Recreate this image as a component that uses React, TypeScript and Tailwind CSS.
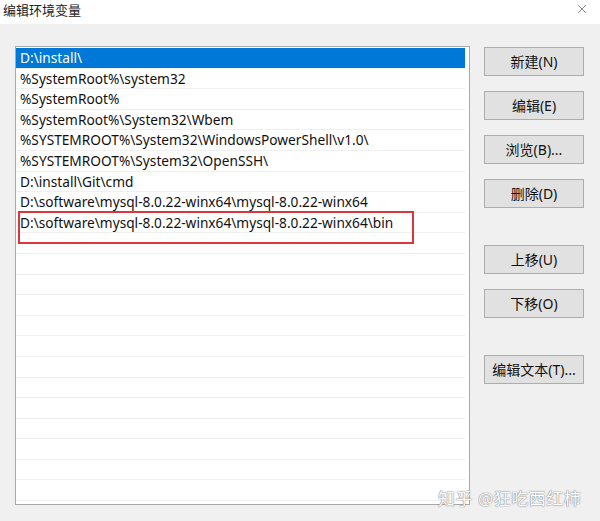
import { X } from 'lucide-react';

const paths = [
  'D:\\install\\',
  '%SystemRoot%\\system32',
  '%SystemRoot%',
  '%SystemRoot%\\System32\\Wbem',
  '%SYSTEMROOT%\\System32\\WindowsPowerShell\\v1.0\\',
  '%SYSTEMROOT%\\System32\\OpenSSH\\',
  'D:\\install\\Git\\cmd',
  'D:\\software\\mysql-8.0.22-winx64\\mysql-8.0.22-winx64',
  'D:\\software\\mysql-8.0.22-winx64\\mysql-8.0.22-winx64\\bin',
];

const rows = Array.from({ length: 22 }, (_, i) => paths[i] ?? '');

function DlgButton({ label, className = '' }: { label: string; className?: string }) {
  return (
    <button
      className={`w-[100px] h-[29px] bg-[#e1e1e1] border border-[#adadad] text-[14px] text-[#111] flex items-center justify-center ${className}`}
    >
      {label}
    </button>
  );
}

export default function App() {
  return (
    <div
      className="w-[600px] h-[521px] bg-[#f0f0f0] flex flex-col overflow-hidden relative"
      style={{ fontFamily: '"Noto Sans", "Noto Sans CJK SC", sans-serif' }}
    >
      <div className="h-[24px] bg-white flex items-start justify-between shrink-0">
        <span className="ml-[3px] mt-[1px] text-[13px] text-[#222] leading-[18px]">编辑环境变量</span>
        <X size={14} strokeWidth={1} className="mt-[2px] mr-[11px] text-[#333]" />
      </div>

      <div className="flex items-start">
        <div className="relative ml-[15px] mt-[22px] w-[455px] h-[459px] bg-white border border-[#a9a9a9] overflow-hidden">
          <div className="pt-[1px] pr-[4px]">
            {rows.map((p, i) => (
              <div
                key={i}
                className={`h-[20.6px] flex items-center pl-[4px] text-[13.7px] leading-none whitespace-nowrap border-b border-[#f0f0f0] ${
                  i === 0 ? 'bg-[#0078d7] text-white' : 'text-[#111]'
                }`}
              >
                {p}
              </div>
            ))}
          </div>
          <div className="absolute left-[2px] top-[164px] w-[396px] h-[33px] border-2 border-[#d9363e]" />
        </div>

        <div className="ml-[14px] mt-[23px] flex flex-col">
          <DlgButton label="新建(N)" />
          <DlgButton label="编辑(E)" className="mt-[15px]" />
          <DlgButton label="浏览(B)..." className="mt-[15px]" />
          <DlgButton label="删除(D)" className="mt-[15px]" />
          <DlgButton label="上移(U)" className="mt-[37px]" />
          <DlgButton label="下移(O)" className="mt-[15px]" />
          <DlgButton label="编辑文本(T)..." className="mt-[37px]" />
        </div>
      </div>

      <div
        className="absolute left-[438px] top-[486px] text-[17px] text-white tracking-[0.5px]"
        style={{ textShadow: '0 0 1px #777, 0 0 1px #777' }}
      >
        知乎 @狂吃西红柿
      </div>
    </div>
  );
}
